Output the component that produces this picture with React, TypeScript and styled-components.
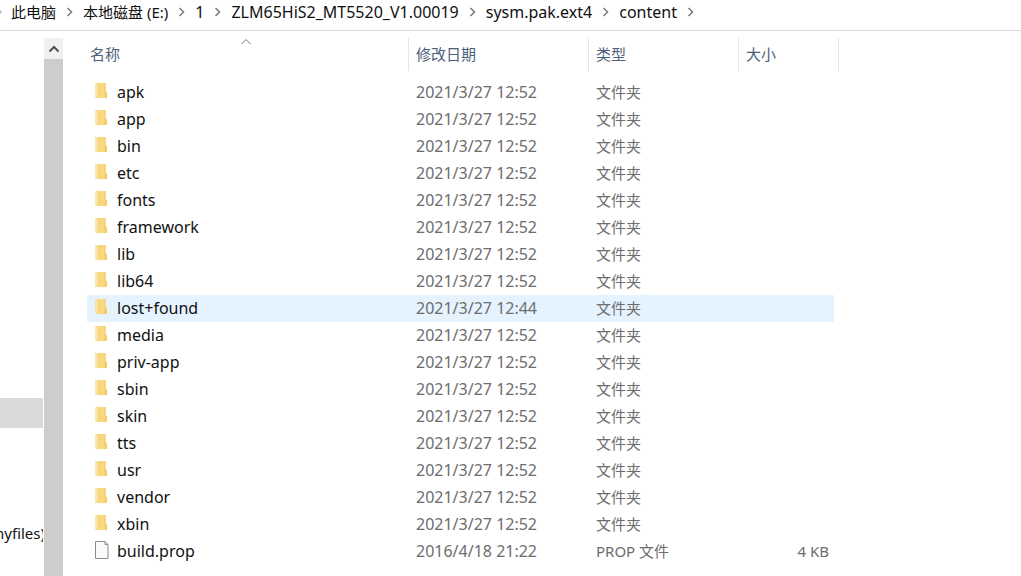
import React from "react";
import styled, { createGlobalStyle } from "styled-components";

const GlobalStyle = createGlobalStyle`
  * { box-sizing: border-box; }
  body {
    margin: 0;
    background: #fff;
    color: #111;
    font: 16px/27px "Noto Sans", "Noto Sans CJK SC", sans-serif;
  }
`;

const Window = styled.div`
  display: flex;
  flex-direction: column;
  height: 100vh;
  overflow: hidden;
`;

const AddressBar = styled.nav`
  display: flex;
  align-items: center;
  flex: none;
  height: 31px;
  padding-bottom: 6px;
  border-bottom: 1px solid #dadada;
  white-space: nowrap;
  overflow: hidden;
`;

const Crumb = styled.a<{ $chinese: boolean }>`
  color: #111;
  font-size: ${(p) => (p.$chinese ? 15 : 16)}px;
  text-decoration: none;
`;

const CrumbArrow = styled.svg`
  flex: none;
  width: 27px;
  height: 12px;
  fill: none;
  stroke: #777;
  stroke-width: 1.5;

  &:first-child {
    width: 11px;
    stroke: #bbb;
  }
`;

const Body = styled.div`
  display: flex;
  flex: 1;
  min-height: 0;
`;

const Sidebar = styled.aside`
  flex: none;
  width: 43px;
  padding-top: 367px;
  overflow: hidden;
`;

const TreeItem = styled.div<{ $selected?: boolean }>`
  display: flex;
  justify-content: flex-end;
  height: 30px;
  margin-bottom: 90px;
  font-size: 15px;
  line-height: 30px;
  overflow: hidden;
  background: ${(p) => (p.$selected ? "#d9d9d9" : "transparent")};
`;

const TreeLabel = styled.span`
  margin-right: -2px;
`;

const ScrollBar = styled.div`
  display: flex;
  flex-direction: column;
  flex: none;
  width: 19px;
  margin: 7px 1px 0 1px;
  background: #cdcdcd;
`;

const ScrollButton = styled.button`
  display: flex;
  align-items: center;
  justify-content: center;
  height: 21px;
  padding: 0;
  border: 0;
  background: #f0f0f0;
`;

const Pane = styled.main`
  flex: 1;
  min-width: 0;
  padding: 7px 0 0 23px;
  overflow: hidden;
`;

const FileTable = styled.table`
  width: 752px;
  table-layout: fixed;
  border-collapse: separate;
  border-spacing: 0;
`;

const Column = styled.col<{ $width: number }>`
  width: ${(p) => p.$width}px;
`;

const HeadCell = styled.th`
  position: relative;
  height: 33px;
  padding: 0 0 0 7px;
  border-right: 1px solid #e5e5e5;
  color: #4c607a;
  font-size: 15px;
  font-weight: 400;
  text-align: left;

  &:first-child {
    padding-left: 3px;
  }
`;

const SortMark = styled.svg`
  position: absolute;
  top: 0;
  left: 50%;
  width: 12px;
  height: 7px;
  margin-left: -8px;
  fill: none;
  stroke: #777;
`;

const FileRows = styled.tbody`
  &::before {
    content: "";
    display: table-row;
    height: 8px;
  }
`;

const Row = styled.tr<{ $hovered: boolean }>`
  height: 27px;

  td {
    background-color: ${(p) => (p.$hovered ? "#e5f3fe" : "transparent")};
  }
`;

const Cell = styled.td`
  padding: 0 0 0 7px;
  color: #6d6d6d;
  line-height: 27px;
  white-space: nowrap;
`;

const TypeCell = styled(Cell)`
  font-size: 15px;
`;

const SizeCell = styled(Cell)`
  padding-right: 5px;
  border-right: 5px solid transparent;
  background-clip: padding-box;
  font-size: 15px;
  text-align: right;
`;

const NameCell = styled(Cell)`
  color: #111;
`;

const FileName = styled.span`
  display: flex;
  align-items: center;
  gap: 8px;
  height: 27px;
`;

const FileIcon = styled.svg`
  flex: none;
  width: 15px;
  height: 20px;
  margin-bottom: 4px;
`;

function FolderIcon() {
  return (
    <FileIcon viewBox="0 0 15 20" aria-hidden="true">
      <path d="M1.500 2h10v8.500l1.500 1v5.500H1.500z" fill="#f8d87e" />
      <path d="M1.500 2l3 1v14.500l-3-1z" fill="#fbe3a2" />
      <path d="M10.500 2h1v8.500l1.500 1v5.500h-2.500z" fill="#f4cc66" />
      <path d="M4.500 3v11l-1 2.500" fill="none" stroke="#edc765" strokeWidth=".6" />
    </FileIcon>
  );
}

function DocumentIcon() {
  return (
    <FileIcon viewBox="0 0 15 20" aria-hidden="true">
      <path d="M1.500 1.500h9.500l3 3v14H1.500z" fill="#fafafa" stroke="#8b8b8b" />
      <path d="M11 1.500v3h3" fill="none" stroke="#8b8b8b" />
    </FileIcon>
  );
}

const crumbs = [
  { label: "此电脑", chinese: true },
  { label: "本地磁盘 (E:)", chinese: true },
  { label: "1", chinese: false },
  { label: "ZLM65HiS2_MT5520_V1.00019", chinese: false },
  { label: "sysm.pak.ext4", chinese: false },
  { label: "content", chinese: false },
];

const folders = [
  "apk", "app", "bin", "etc", "fonts", "framework", "lib", "lib64", "lost+found",
  "media", "priv-app", "sbin", "skin", "tts", "usr", "vendor", "xbin",
];

const files = [
  ...folders.map((name) => ({
    name,
    date: name === "lost+found" ? "2021/3/27 12:44" : "2021/3/27 12:52",
    type: "文件夹",
    size: "",
  })),
  { name: "build.prop", date: "2016/4/18 21:22", type: "PROP 文件", size: "4 KB" },
];

function Arrow() {
  return (
    <CrumbArrow viewBox="-13 -6 26 12" aria-hidden="true">
      <path d="M-2-4 2 0l-4 4" />
    </CrumbArrow>
  );
}

export default function App() {
  return (
    <Window>
      <GlobalStyle />
      <AddressBar>
        <CrumbArrow viewBox="0 0 11 12" aria-hidden="true">
          <path d="M-3 2 1 6l-4 4" />
        </CrumbArrow>
        {crumbs.map((crumb) => (
          <React.Fragment key={crumb.label}>
            <Crumb href="#" $chinese={crumb.chinese}>{crumb.label}</Crumb>
            <Arrow />
          </React.Fragment>
        ))}
      </AddressBar>
      <Body>
        <Sidebar>
          <TreeItem $selected />
          <TreeItem>
            <TreeLabel>myfiles)</TreeLabel>
          </TreeItem>
        </Sidebar>
        <ScrollBar>
          <ScrollButton aria-label="向上滚动">
            <svg width="12" height="8" fill="none" stroke="#505050" strokeWidth="2" aria-hidden="true">
              <path d="m1.500 6.500 4.500-4.500 4.500 4.500" />
            </svg>
          </ScrollButton>
        </ScrollBar>
        <Pane>
          <FileTable>
            <colgroup>
              <Column $width={322} />
              <Column $width={180} />
              <Column $width={150} />
              <Column $width={100} />
            </colgroup>
            <thead>
              <tr>
                <HeadCell>
                  名称
                  <SortMark viewBox="0 0 12 7" aria-hidden="true">
                    <path d="m1.500 6 4.500-4.500 4.500 4.500" />
                  </SortMark>
                </HeadCell>
                <HeadCell>修改日期</HeadCell>
                <HeadCell>类型</HeadCell>
                <HeadCell>大小</HeadCell>
              </tr>
            </thead>
            <FileRows>
              {files.map((file) => (
                <Row key={file.name} $hovered={file.name === "lost+found"}>
                  <NameCell>
                    <FileName>
                      {file.size ? <DocumentIcon /> : <FolderIcon />}
                      {file.name}
                    </FileName>
                  </NameCell>
                  <Cell>{file.date}</Cell>
                  <TypeCell>{file.type}</TypeCell>
                  <SizeCell>{file.size}</SizeCell>
                </Row>
              ))}
            </FileRows>
          </FileTable>
        </Pane>
      </Body>
    </Window>
  );
}
